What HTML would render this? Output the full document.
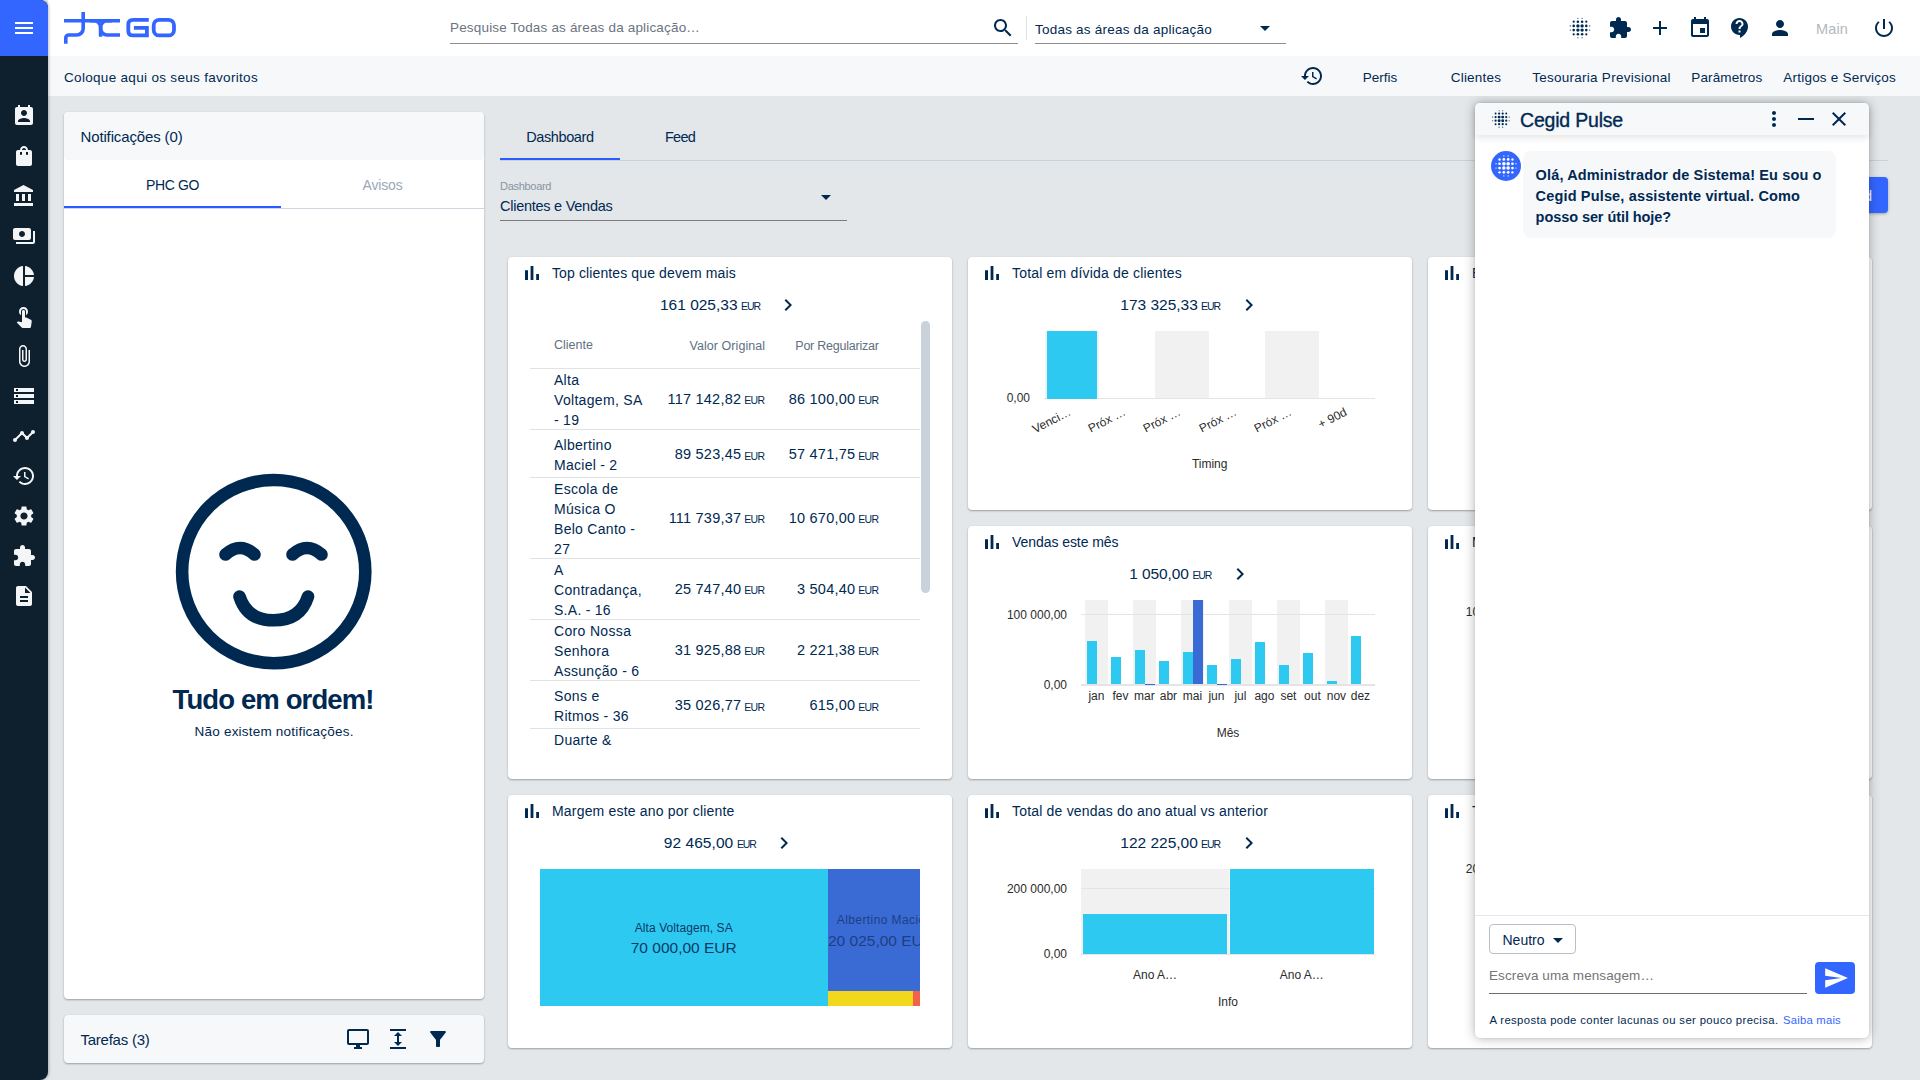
<!DOCTYPE html>
<html lang="pt">
<head>
<meta charset="utf-8">
<title>PHC GO</title>
<style>
*{box-sizing:border-box;margin:0;padding:0}
html,body{width:1920px;height:1080px;overflow:hidden}
body{position:relative;background:#e3e7e9;font-family:"Liberation Sans",sans-serif;color:#002952;font-size:15px}
.abs{position:absolute}
.t{position:absolute;white-space:nowrap;line-height:1.15}
svg{display:block}
.ic{position:absolute;fill:#002952}
.card{position:absolute;background:#fff;border-radius:4px;box-shadow:0 1px 2px rgba(0,0,0,.30),0 0 1px rgba(0,0,0,.10)}
</style>
</head>
<body>
<!-- top bar -->
<div class="abs" style="left:48px;top:0px;width:1872px;height:56px;background:#fff;"></div>
<div class="abs" style="left:48px;top:56px;width:1872px;height:40px;background:#f7f8fa;"></div>
<svg class="abs" style="left:56px;top:4px;width:130px;height:48px" viewBox="56 4 130 48" fill="none" stroke="#3366ff" stroke-width="3.6">
<path d="M64 20.76H120"/>
<path d="M83.2 12.1V28.54A6.5 6.5 0 0 1 76.7 35.04H68.6A2.8 2.8 0 0 0 65.8 37.84V43.8"/>
<path d="M90 20.76H94.1A6.500 6.500 0 0 1 100.6 27.26V36.84"/>
<path d="M112 20.76H107.1A6.500 6.500 0 0 0 100.6 27.26V28.54A6.500 6.500 0 0 0 107.1 35.04H120"/>
<path stroke-width="3.8" d="M148.8 19.8H133Q128.3 19.8 128.300 24.5V30.7Q128.3 35.4 133 35.400H146.9V27.87H133.9"/>
<rect stroke-width="3.8" x="153.7" y="19.8" width="20.3" height="15.6" rx="5.5"/>
</svg>
<span class="t" style="left:450.00px;top:19.94px;font-size:13.5px;letter-spacing:0.171px;color:#6b7480;">Pesquise Todas as áreas da aplicação…</span>
<div class="abs" style="left:450px;top:43px;width:568px;height:1px;background:#8e8e8e;"></div>
<svg class="ic" style="left:991.00px;top:16.00px;width:24px;height:24px;" viewBox="0 0 24 24"><path d="M15.5 14h-.79l-.28-.27C15.41 12.59 16 11.11 16 9.5 16 5.91 13.09 3 9.5 3S3 5.91 3 9.5 5.91 16 9.5 16c1.61 0 3.09-.59 4.23-1.57l.27.28v.79l5 4.99L20.490 19l-4.990-5zm-6 0C7.010 14 5 11.990 5 9.500S7.010 5 9.500 5 14 7.010 14 9.500 11.990 14 9.500 14z"/></svg>
<div class="abs" style="left:1026px;top:16px;width:1px;height:24px;background:#dfe3e8;"></div>
<span class="t" style="left:1035.00px;top:21.94px;font-size:13.5px;letter-spacing:0.218px;">Todas as áreas da aplicação</span>
<svg class="ic" style="left:1253.00px;top:16.00px;width:24px;height:24px;" viewBox="0 0 24 24"><path d="M7 10l5 5 5-5z"/></svg>
<div class="abs" style="left:1035px;top:43px;width:251px;height:1px;background:#8e8e8e;"></div>
<svg class="ic" style="left:1608.00px;top:16.00px;width:24px;height:24px;" viewBox="0 0 24 24"><path d="M20.5 11H19V7c0-1.1-.9-2-2-2h-4V3.5C13 2.12 11.88 1 10.5 1S8 2.12 8 3.5V5H4c-1.1 0-1.99.9-1.99 2v3.8H3.500c1.49 0 2.7 1.21 2.7 2.7s-1.21 2.7-2.7 2.7H2V20c0 1.1.9 2 2 2h3.800v-1.500c0-1.49 1.21-2.7 2.7-2.7 1.49 0 2.7 1.21 2.7 2.7V22H17c1.1 0 2-.9 2-2v-4h1.500c1.38 0 2.5-1.12 2.5-2.5S21.880 11 20.500 11z"/></svg>
<svg class="ic" style="left:1648.00px;top:16.00px;width:24px;height:24px;" viewBox="0 0 24 24"><path d="M19 13h-6v6h-2v-6H5v-2h6V5h2v6h6v2z"/></svg>
<svg class="ic" style="left:1688.00px;top:16.00px;width:24px;height:24px;" viewBox="0 0 24 24"><path d="M17 12h-5v5h5v-5zM16 1v2H8V1H6v2H5c-1.11 0-1.99.9-1.99 2L3 19c0 1.1.89 2 2 2h14c1.1 0 2-.9 2-2V5c0-1.1-.9-2-2-2h-1V1h-2zm3 18H5V8h14v11z"/></svg>
<svg class="ic" style="left:1728.00px;top:16.00px;width:24px;height:24px;" viewBox="0 0 24 24"><path d="M11.5 2C6.81 2 3 5.81 3 10.5S6.81 19 11.5 19h.5v3c4.86-2.34 8-7 8-11.5C20 5.81 16.19 2 11.5 2zm1 14.5h-2v-2h2v2zm0-3.500h-2c0-3.250 3-3 3-5 0-1.100-.9-2-2-2s-2 .9-2 2h-2c0-2.210 1.790-4 4-4s4 1.790 4 4c0 2.500-3 2.750-3 5z"/></svg>
<svg class="ic" style="left:1768.00px;top:16.00px;width:24px;height:24px;" viewBox="0 0 24 24"><path d="M12 12c2.21 0 4-1.79 4-4s-1.79-4-4-4-4 1.79-4 4 1.79 4 4 4zm0 2c-2.67 0-8 1.34-8 4v2h16v-2c0-2.66-5.33-4-8-4z"/></svg>
<svg class="ic" style="left:1872.00px;top:16.00px;width:24px;height:24px;" viewBox="0 0 24 24"><path d="M13 3h-2v10h2V3zm4.83 2.17l-1.42 1.42C17.99 7.86 19 9.81 19 12c0 3.87-3.13 7-7 7s-7-3.13-7-7c0-2.19 1.01-4.14 2.58-5.420L6.170 5.170C4.230 6.820 3 9.260 3 12c0 4.970 4.030 9 9 9s9-4.030 9-9c0-2.740-1.230-5.180-3.170-6.830z"/></svg>
<span class="t" style="left:1816.00px;top:20.66px;font-size:14.5px;letter-spacing:0.143px;color:#b4b7be;">Main</span>
<span class="t" style="left:64.00px;top:70.04px;font-size:13.5px;letter-spacing:0.313px;">Coloque aqui os seus favoritos</span>
<svg class="ic" style="left:1300.00px;top:64.00px;width:24px;height:24px;" viewBox="0 0 24 24"><path d="M13 3c-4.97 0-9 4.03-9 9H1l3.89 3.89.07.14L9 12H6c0-3.87 3.13-7 7-7s7 3.13 7 7-3.13 7-7 7c-1.93 0-3.68-.79-4.94-2.06l-1.42 1.42C8.27 19.99 10.51 21 13 21c4.97 0 9-4.03 9-9s-4.030-9-9-9zm-1 5v5l4.28 2.54.72-1.21-3.5-2.08V8H12z"/></svg>
<span class="t" style="left:1362.70px;top:70.04px;font-size:13.5px;letter-spacing:0.015px;">Perfis</span>
<span class="t" style="left:1450.70px;top:70.04px;font-size:13.5px;letter-spacing:0.228px;">Clientes</span>
<span class="t" style="left:1532.30px;top:70.04px;font-size:13.5px;letter-spacing:0.254px;">Tesouraria Previsional</span>
<span class="t" style="left:1691.30px;top:70.04px;font-size:13.5px;letter-spacing:0.122px;">Parâmetros</span>
<span class="t" style="left:1783.30px;top:70.04px;font-size:13.5px;letter-spacing:0.217px;">Artigos e Serviços</span>
<!-- sidebar -->
<div class="abs" style="left:0;top:0;width:48px;height:1080px;background:#0e202e;border-radius:0 8px 8px 0;box-shadow:1px 0 3px rgba(0,0,0,.24)"></div>
<div class="abs" style="left:0;top:0;width:48px;height:56px;background:#3366ff;border-radius:0 8px 0 0"></div>
<svg class="ic" style="left:12.00px;top:16.00px;width:24px;height:24px;fill:#fff;" viewBox="0 0 24 24"><path d="M3 18h18v-2H3v2zm0-5h18v-2H3v2zm0-7v2h18V6H3z"/></svg>
<svg class="ic" style="left:12.00px;top:104.00px;width:24px;height:24px;fill:#f4f5f7;" viewBox="0 0 24 24"><path d="M19 3h-1V1h-2v2H8V1H6v2H5c-1.11 0-2 .9-2 2v14c0 1.1.89 2 2 2h14c1.1 0 2-.9 2-2V5c0-1.1-.9-2-2-2zm-7 3c1.66 0 3 1.34 3 3s-1.34 3-3 3-3-1.34-3-3 1.34-3 3-3zm6 12H6v-1c0-2 4-3.1 6-3.1s6 1.1 6 3.1v1z"/></svg>
<svg class="ic" style="left:12.00px;top:144.00px;width:24px;height:24px;fill:#f4f5f7;" viewBox="0 0 24 24"><path d="M18 6h-2c0-2.21-1.79-4-4-4S8 3.79 8 6H6c-1.1 0-2 .9-2 2v12c0 1.1.9 2 2 2h12c1.1 0 2-.9 2-2V8c0-1.1-.9-2-2-2zm-8 4c0 .55-.45 1-1 1s-1-.45-1-1V8h2v2zm2-6c1.1 0 2 .9 2 2h-4c0-1.1.9-2 2-2zm4 6c0 .55-.45 1-1 1s-1-.45-1-1V8h2v2z"/></svg>
<svg class="ic" style="left:12.00px;top:184.00px;width:24px;height:24px;fill:#f4f5f7;" viewBox="0 0 24 24"><path d="M4 10v7h3v-7H4zm6 0v7h3v-7h-3zM2 22h19v-3H2v3zm14-12v7h3v-7h-3zm-4.5-9L2 6v2h19V6l-9.5-5z"/></svg>
<svg class="ic" style="left:12.00px;top:224.00px;width:24px;height:24px;fill:#f4f5f7;" viewBox="0 0 24 24"><path d="M19 14V6c0-1.1-.9-2-2-2H3c-1.1 0-2 .9-2 2v8c0 1.1.9 2 2 2h14c1.1 0 2-.9 2-2zm-9-1c-1.66 0-3-1.34-3-3s1.34-3 3-3 3 1.34 3 3-1.34 3-3 3zm13-6v11c0 1.1-.9 2-2 2H4v-2h17V7h2z"/></svg>
<svg class="ic" style="left:12.00px;top:264.00px;width:24px;height:24px;fill:#f4f5f7;" viewBox="0 0 24 24"><path d="M11 2v20c-5.07-.5-9-4.79-9-10s3.93-9.5 9-10zm2.03 0v8.99H22c-.47-4.74-4.24-8.52-8.97-8.99zm0 11.01V22c4.74-.47 8.5-4.25 8.97-8.99h-8.97z"/></svg>
<svg class="ic" style="left:12.00px;top:304.00px;width:24px;height:24px;fill:#f4f5f7;" viewBox="0 0 24 24"><path d="M9 11.24V7.5C9 6.12 10.12 5 11.5 5S14 6.12 14 7.5v3.74c1.21-.81 2-2.18 2-3.74C16 5.01 13.99 3 11.5 3S7 5.01 7 7.5c0 1.56.79 2.93 2 3.74zm9.84 4.63l-4.54-2.26c-.17-.07-.35-.11-.54-.11H13v-6c0-.83-.67-1.5-1.5-1.5S10 6.67 10 7.5v10.74l-3.43-.72c-.08-.01-.15-.03-.24-.03-.31 0-.59.13-.79.33l-.79.8 4.94 4.94c.27.27.65.44 1.06.44h6.79c.75 0 1.33-.55 1.44-1.28l.75-5.27c.01-.07.02-.14.02-.2 0-.62-.38-1.16-.91-1.38z"/></svg>
<svg class="ic" style="left:12.00px;top:344.00px;width:24px;height:24px;fill:#f4f5f7;" viewBox="0 0 24 24"><path d="M16.5 6v11.5c0 2.21-1.79 4-4 4s-4-1.79-4-4V5c0-1.38 1.12-2.5 2.5-2.5s2.5 1.12 2.5 2.5v10.5c0 .55-.45 1-1 1s-1-.45-1-1V6H10v9.5c0 1.38 1.12 2.5 2.5 2.5s2.5-1.12 2.5-2.5V5c0-2.21-1.79-4-4-4S7 2.79 7 5v12.5c0 3.04 2.46 5.5 5.5 5.5s5.500-2.46 5.5-5.5V6h-1.5z"/></svg>
<svg class="ic" style="left:12.00px;top:384.00px;width:24px;height:24px;fill:#f4f5f7;" viewBox="0 0 24 24"><path d="M2 20h20v-4H2v4zm2-3h2v2H4v-2zM2 4v4h20V4H2zm4 3H4V5h2v2zm-4 7h20v-4H2v4zm2-3h2v2H4v-2z"/></svg>
<svg class="ic" style="left:12.00px;top:424.00px;width:24px;height:24px;fill:#f4f5f7;" viewBox="0 0 24 24"><path d="M23 8c0 1.1-.9 2-2 2-.18 0-.35-.02-.51-.07l-3.56 3.55c.05.16.07.34.07.52 0 1.1-.9 2-2 2s-2-.9-2-2c0-.18.02-.36.07-.52l-2.55-2.55c-.16.05-.34.07-.52.07s-.36-.02-.52-.07l-4.55 4.56c.05.16.07.33.07.51 0 1.1-.9 2-2 2s-2-.9-2-2 .9-2 2-2c.18 0 .35.02.51.07l4.56-4.55C8.02 9.36 8 9.18 8 9c0-1.1.9-2 2-2s2 .9 2 2c0 .18-.02.36-.07.52l2.55 2.55c.16-.05.34-.07.52-.07s.36.02.52.07l3.55-3.56C19.02 8.35 19 8.18 19 8c0-1.1.9-2 2-2s2 .9 2 2z"/></svg>
<svg class="ic" style="left:12.00px;top:464.00px;width:24px;height:24px;fill:#f4f5f7;" viewBox="0 0 24 24"><path d="M13 3c-4.97 0-9 4.03-9 9H1l3.89 3.89.07.14L9 12H6c0-3.87 3.13-7 7-7s7 3.13 7 7-3.13 7-7 7c-1.93 0-3.68-.79-4.94-2.06l-1.42 1.42C8.27 19.99 10.51 21 13 21c4.97 0 9-4.03 9-9s-4.030-9-9-9zm-1 5v5l4.28 2.54.72-1.21-3.5-2.08V8H12z"/></svg>
<svg class="ic" style="left:12.00px;top:504.00px;width:24px;height:24px;fill:#f4f5f7;" viewBox="0 0 24 24"><path d="M19.14 12.94c.04-.3.06-.61.06-.94 0-.32-.02-.64-.07-.94l2.03-1.58c.18-.14.23-.41.12-.61l-1.92-3.32c-.12-.22-.37-.29-.59-.22l-2.39.96c-.5-.38-1.03-.7-1.62-.94l-.36-2.54c-.04-.24-.24-.41-.48-.41h-3.84c-.24 0-.43.17-.47.41l-.36 2.54c-.59.24-1.13.57-1.62.94l-2.39-.96c-.22-.08-.47 0-.59.22L2.74 8.87c-.12.21-.08.47.12.61l2.030 1.58c-.05.3-.09.63-.09.94s.02.64.07.94l-2.030 1.58c-.18.14-.23.41-.12.61l1.920 3.32c.12.22.37.29.59.22l2.39-.96c.5.38 1.030.7 1.620.94l.36 2.54c.05.24.24.41.48.41h3.840c.24 0 .44-.17.47-.41l.36-2.54c.59-.24 1.130-.56 1.620-.94l2.390.96c.22.08.47 0 .59-.22l1.920-3.32c.12-.22.07-.47-.12-.61l-2.010-1.580zM12 15.6c-1.980 0-3.600-1.620-3.600-3.600s1.620-3.600 3.600-3.600 3.600 1.620 3.600 3.600-1.620 3.600-3.600 3.600z"/></svg>
<svg class="ic" style="left:12.00px;top:544.00px;width:24px;height:24px;fill:#f4f5f7;" viewBox="0 0 24 24"><path d="M20.5 11H19V7c0-1.1-.9-2-2-2h-4V3.5C13 2.12 11.88 1 10.5 1S8 2.12 8 3.5V5H4c-1.1 0-1.99.9-1.99 2v3.8H3.500c1.49 0 2.7 1.21 2.7 2.7s-1.21 2.7-2.7 2.7H2V20c0 1.1.9 2 2 2h3.800v-1.500c0-1.49 1.21-2.7 2.7-2.7 1.49 0 2.7 1.21 2.7 2.7V22H17c1.1 0 2-.9 2-2v-4h1.500c1.38 0 2.5-1.12 2.5-2.5S21.880 11 20.500 11z"/></svg>
<svg class="ic" style="left:12.00px;top:584.00px;width:24px;height:24px;fill:#f4f5f7;" viewBox="0 0 24 24"><path d="M14 2H6c-1.1 0-1.99.9-1.99 2L4 20c0 1.1.89 2 1.99 2H18c1.1 0 2-.9 2-2V8l-6-6zm2 16H8v-2h8v2zm0-4H8v-2h8v2zm-3-5V3.500L18.500 9H13z"/></svg>
<!-- notifications -->
<div class="card" style="left:64px;top:112px;width:420px;height:887px"></div>
<div class="abs" style="left:64px;top:112px;width:420px;height:48px;background:#f7f8fa;border-radius:4px"></div>
<span class="t" style="left:80.50px;top:127.88px;font-size:15px;letter-spacing:-0.138px;">Notificações (0)</span>
<span class="t" style="left:146.00px;top:176.95px;font-size:14px;letter-spacing:-0.371px;">PHC GO</span>
<span class="t" style="left:362.50px;top:176.95px;font-size:14px;letter-spacing:-0.164px;color:#9aa8b8;">Avisos</span>
<div class="abs" style="left:64px;top:208px;width:420px;height:1px;background:#cfd6df;"></div>
<div class="abs" style="left:64px;top:206px;width:217px;height:2px;background:#2a5cff;"></div>
<svg class="abs" style="left:170px;top:468px;width:208px;height:208px" viewBox="170 468 208 208" fill="none" stroke="#002952" stroke-width="12.6" stroke-linecap="round">
<circle cx="273.7" cy="571.6" r="91.6"/>
<path d="M225.500 554.500Q240 541.500 254.500 554.500"/>
<path d="M292.500 554.500Q307 541.500 321.500 554.500"/>
<path d="M239.500 596.500Q247 620.300 273.700 620.300Q300.400 620.300 308 596.500"/>
</svg>
<span class="t" style="left:172.56px;top:684.19px;font-size:27.5px;letter-spacing:-0.884px;font-weight:700;">Tudo em ordem!</span>
<span class="t" style="left:194.60px;top:723.74px;font-size:13.5px;letter-spacing:0.207px;">Não existem notificações.</span>
<div class="card" style="left:64px;top:1015px;width:420px;height:48px;background:#f7f8fa"></div>
<span class="t" style="left:80.50px;top:1031.38px;font-size:15px;letter-spacing:-0.245px;">Tarefas (3)</span>
<svg class="ic" style="left:346.00px;top:1027.00px;width:24px;height:24px;" viewBox="0 0 24 24"><path d="M21 2H3c-1.1 0-2 .9-2 2v12c0 1.1.9 2 2 2h7v2H8v2h8v-2h-2v-2h7c1.1 0 2-.9 2-2V4c0-1.1-.9-2-2-2zm0 14H3V4h18v12z"/></svg>
<svg class="ic" style="left:386.00px;top:1027.00px;width:24px;height:24px;" viewBox="0 0 24 24"><path d="M4 20h16v2H4zM4 2h16v2H4zm9 7h3l-4-4-4 4h3v6H8l4 4 4-4h-3z"/></svg>
<svg class="ic" style="left:426.00px;top:1027.00px;width:24px;height:24px;" viewBox="0 0 24 24"><path d="M4.25 5.61C6.27 8.2 10 13 10 13v6c0 .55.45 1 1 1h2c.55 0 1-.45 1-1v-6s3.72-4.8 5.74-7.39c.51-.66.04-1.61-.79-1.61H5.04c-.83 0-1.3.95-.79 1.610z"/></svg>
<!-- dashboard -->
<span class="t" style="left:526.25px;top:129.16px;font-size:14.5px;letter-spacing:-0.404px;">Dashboard</span>
<span class="t" style="left:665.00px;top:129.16px;font-size:14.5px;letter-spacing:-0.763px;">Feed</span>
<div class="abs" style="left:500px;top:160px;width:1388px;height:1px;background:#c9d2dc;"></div>
<div class="abs" style="left:500px;top:158px;width:120px;height:2px;background:#2a5cff;"></div>
<span class="t" style="left:500.00px;top:179.88px;font-size:11px;letter-spacing:-0.291px;color:#8794a5;">Dashboard</span>
<span class="t" style="left:500.00px;top:197.96px;font-size:14.5px;letter-spacing:-0.258px;">Clientes e Vendas</span>
<svg class="ic" style="left:814.25px;top:185.00px;width:24px;height:24px;" viewBox="0 0 24 24"><path d="M7 10l5 5 5-5z"/></svg>
<div class="abs" style="left:500px;top:220px;width:347px;height:1px;background:#7b7b7b;"></div>
<div class="abs" style="left:1716px;top:177px;width:172px;height:36px;background:#3366ff;border-radius:4px;box-shadow:0 1px 3px rgba(0,0,0,.3)"></div>
<span class="t" style="left:1734.25px;top:187.65px;font-size:14px;color:#fff;">Configurar Dashboard</span>
<div class="card" style="left:508px;top:257px;width:444px;height:522px"></div>
<svg class="ic" style="left:519.50px;top:261.00px;width:24px;height:24px;" viewBox="0 0 24 24"><path d="M5 9.2h3V19H5zM10.6 5h2.8v14h-2.8zm5.6 8H19v6h-2.8z"/></svg>
<span class="t" style="left:552.00px;top:264.95px;font-size:14px;letter-spacing:0.119px;">Top clientes que devem mais</span>
<span class="t" style="left:660.00px;top:296.09px;font-size:15.5px;letter-spacing:-0.008px;">161 025,33</span>
<span class="t" style="left:741.00px;top:300.46px;font-size:10.5px;letter-spacing:-1.057px;">EUR</span>
<svg class="ic" style="left:776.00px;top:292.50px;width:24px;height:24px;" viewBox="0 0 24 24"><path d="M10 6L8.59 7.41 13.17 12l-4.58 4.59L10 18l6-6z"/></svg>
<div class="abs" style="left:508px;top:321px;width:444px;height:430px;overflow:hidden">
<span class="t" style="left:46.00px;top:16.81px;font-size:12.5px;letter-spacing:0.013px;color:#5f6f82;">Cliente</span>
<span class="t" style="left:181.55px;top:17.81px;font-size:12.5px;letter-spacing:0.050px;color:#5f6f82;">Valor Original</span>
<span class="t" style="left:287.28px;top:17.81px;font-size:12.5px;letter-spacing:-0.223px;color:#5f6f82;">Por Regularizar</span>
<div class="abs" style="left:22px;top:47px;width:390px;height:1px;background:#e1e2e4"></div>
<span class="t" style="left:46.00px;top:50.95px;font-size:14px;letter-spacing:0.271px;">Alta</span>
<span class="t" style="left:46.00px;top:70.95px;font-size:14px;letter-spacing:0.318px;">Voltagem, SA</span>
<span class="t" style="left:46.00px;top:90.95px;font-size:14px;letter-spacing:0.271px;">- 19</span>
<span class="t" style="left:159.57px;top:69.66px;font-size:14.5px;letter-spacing:0.214px;">117 142,82</span>
<span class="t" style="left:236.28px;top:73.46px;font-size:10.5px;letter-spacing:-0.723px;">EUR</span>
<span class="t" style="left:280.77px;top:69.66px;font-size:14.5px;letter-spacing:0.215px;">86 100,00</span>
<span class="t" style="left:350.28px;top:73.46px;font-size:10.5px;letter-spacing:-0.723px;">EUR</span>
<div class="abs" style="left:22px;top:108px;width:390px;height:1px;background:#e1e2e4"></div>
<span class="t" style="left:46.00px;top:116.45px;font-size:14px;letter-spacing:0.276px;">Albertino</span>
<span class="t" style="left:46.00px;top:136.45px;font-size:14px;letter-spacing:0.273px;">Maciel - 2</span>
<span class="t" style="left:166.77px;top:125.46px;font-size:14.5px;letter-spacing:0.215px;">89 523,45</span>
<span class="t" style="left:236.28px;top:129.26px;font-size:10.5px;letter-spacing:-0.723px;">EUR</span>
<span class="t" style="left:280.77px;top:125.46px;font-size:14.5px;letter-spacing:0.215px;">57 471,75</span>
<span class="t" style="left:350.28px;top:129.26px;font-size:10.5px;letter-spacing:-0.723px;">EUR</span>
<div class="abs" style="left:22px;top:156px;width:390px;height:1px;background:#e1e2e4"></div>
<span class="t" style="left:46.00px;top:159.95px;font-size:14px;letter-spacing:0.307px;">Escola de</span>
<span class="t" style="left:46.00px;top:179.95px;font-size:14px;letter-spacing:0.333px;">Música O</span>
<span class="t" style="left:46.00px;top:199.95px;font-size:14px;letter-spacing:0.292px;">Belo Canto -</span>
<span class="t" style="left:46.00px;top:219.95px;font-size:14px;letter-spacing:0.350px;">27</span>
<span class="t" style="left:160.68px;top:188.66px;font-size:14.5px;letter-spacing:0.211px;">111 739,37</span>
<span class="t" style="left:236.28px;top:192.46px;font-size:10.5px;letter-spacing:-0.723px;">EUR</span>
<span class="t" style="left:280.77px;top:188.66px;font-size:14.5px;letter-spacing:0.215px;">10 670,00</span>
<span class="t" style="left:350.28px;top:192.46px;font-size:10.5px;letter-spacing:-0.723px;">EUR</span>
<div class="abs" style="left:22px;top:237px;width:390px;height:1px;background:#e1e2e4"></div>
<span class="t" style="left:46.00px;top:240.95px;font-size:14px;">A</span>
<span class="t" style="left:46.00px;top:260.95px;font-size:14px;letter-spacing:0.315px;">Contradança,</span>
<span class="t" style="left:46.00px;top:280.95px;font-size:14px;letter-spacing:0.272px;">S.A. - 16</span>
<span class="t" style="left:166.77px;top:259.66px;font-size:14.5px;letter-spacing:0.215px;">25 747,40</span>
<span class="t" style="left:236.28px;top:263.46px;font-size:10.5px;letter-spacing:-0.723px;">EUR</span>
<span class="t" style="left:289.07px;top:259.66px;font-size:14.5px;letter-spacing:0.212px;">3 504,40</span>
<span class="t" style="left:350.28px;top:263.46px;font-size:10.5px;letter-spacing:-0.723px;">EUR</span>
<div class="abs" style="left:22px;top:298px;width:390px;height:1px;background:#e1e2e4"></div>
<span class="t" style="left:46.00px;top:301.95px;font-size:14px;letter-spacing:0.333px;">Coro Nossa</span>
<span class="t" style="left:46.00px;top:321.95px;font-size:14px;letter-spacing:0.340px;">Senhora</span>
<span class="t" style="left:46.00px;top:341.95px;font-size:14px;letter-spacing:0.306px;">Assunção - 6</span>
<span class="t" style="left:166.77px;top:320.66px;font-size:14.5px;letter-spacing:0.215px;">31 925,88</span>
<span class="t" style="left:236.28px;top:324.46px;font-size:10.5px;letter-spacing:-0.723px;">EUR</span>
<span class="t" style="left:289.07px;top:320.66px;font-size:14.5px;letter-spacing:0.212px;">2 221,38</span>
<span class="t" style="left:350.28px;top:324.46px;font-size:10.5px;letter-spacing:-0.723px;">EUR</span>
<div class="abs" style="left:22px;top:359px;width:390px;height:1px;background:#e1e2e4"></div>
<span class="t" style="left:46.00px;top:367.45px;font-size:14px;letter-spacing:0.327px;">Sons e</span>
<span class="t" style="left:46.00px;top:387.45px;font-size:14px;letter-spacing:0.293px;">Ritmos - 36</span>
<span class="t" style="left:166.77px;top:376.46px;font-size:14.5px;letter-spacing:0.215px;">35 026,77</span>
<span class="t" style="left:236.28px;top:380.26px;font-size:10.5px;letter-spacing:-0.723px;">EUR</span>
<span class="t" style="left:301.54px;top:376.46px;font-size:14.5px;letter-spacing:0.222px;">615,00</span>
<span class="t" style="left:350.28px;top:380.26px;font-size:10.5px;letter-spacing:-0.723px;">EUR</span>
<div class="abs" style="left:22px;top:407px;width:390px;height:1px;background:#e1e2e4"></div>
<span class="t" style="left:46.00px;top:410.95px;font-size:14px;letter-spacing:0.311px;">Duarte &amp;</span>
<span class="t" style="left:46.00px;top:430.95px;font-size:14px;letter-spacing:0.295px;">Duarte,</span>
<span class="t" style="left:46.00px;top:450.95px;font-size:14px;letter-spacing:0.289px;">Lda - 12</span>
</div>
<div class="abs" style="left:921px;top:321px;width:9px;height:272px;background:#c9d1db;border-radius:5px"></div>
<div class="card" style="left:968px;top:257px;width:444px;height:253px"></div>
<svg class="ic" style="left:979.50px;top:261.00px;width:24px;height:24px;" viewBox="0 0 24 24"><path d="M5 9.2h3V19H5zM10.6 5h2.8v14h-2.8zm5.6 8H19v6h-2.8z"/></svg>
<span class="t" style="left:1012.00px;top:264.95px;font-size:14px;letter-spacing:0.186px;">Total em dívida de clientes</span>
<span class="t" style="left:1120.30px;top:296.09px;font-size:15.5px;letter-spacing:-0.008px;">173 325,33</span>
<span class="t" style="left:1201.00px;top:300.46px;font-size:10.5px;letter-spacing:-1.057px;">EUR</span>
<svg class="ic" style="left:1236.50px;top:292.50px;width:24px;height:24px;" viewBox="0 0 24 24"><path d="M10 6L8.59 7.41 13.17 12l-4.58 4.59L10 18l6-6z"/></svg>
<div class="abs" style="left:1044.60px;top:331.00px;width:54.40px;height:67.00px;background:#f1f1f1"></div>
<div class="abs" style="left:1154.70px;top:331.00px;width:54.40px;height:67.00px;background:#f1f1f1"></div>
<div class="abs" style="left:1264.80px;top:331.00px;width:54.40px;height:67.00px;background:#f1f1f1"></div>
<div class="abs" style="left:1044.00px;top:397.50px;width:331.00px;height:1.50px;background:#e4e4e4"></div>
<div class="abs" style="left:1047.00px;top:331.00px;width:50.00px;height:67.50px;background:#2ec9f1"></div>
<span class="t" style="left:1006.64px;top:392.40px;font-size:12px;color:#2b2b2b;">0,00</span>
<span class="t" style="left:1028.74px;top:404.50px;font-size:12px;color:#2b2b2b;transform-origin:100% 50%;transform:rotate(-27deg)">Venci…</span>
<span class="t" style="left:1085.29px;top:404.50px;font-size:12px;color:#2b2b2b;transform-origin:100% 50%;transform:rotate(-27deg)">Próx …</span>
<span class="t" style="left:1140.49px;top:404.50px;font-size:12px;color:#2b2b2b;transform-origin:100% 50%;transform:rotate(-27deg)">Próx …</span>
<span class="t" style="left:1195.69px;top:404.50px;font-size:12px;color:#2b2b2b;transform-origin:100% 50%;transform:rotate(-27deg)">Próx …</span>
<span class="t" style="left:1250.89px;top:404.50px;font-size:12px;color:#2b2b2b;transform-origin:100% 50%;transform:rotate(-27deg)">Próx …</span>
<span class="t" style="left:1315.74px;top:404.50px;font-size:12px;color:#2b2b2b;transform-origin:100% 50%;transform:rotate(-27deg)">+ 90d</span>
<span class="t" style="left:1191.92px;top:458.40px;font-size:12px;color:#2b2b2b;">Timing</span>
<div class="card" style="left:968px;top:526px;width:444px;height:253px"></div>
<svg class="ic" style="left:979.50px;top:530.00px;width:24px;height:24px;" viewBox="0 0 24 24"><path d="M5 9.2h3V19H5zM10.6 5h2.8v14h-2.8zm5.6 8H19v6h-2.8z"/></svg>
<span class="t" style="left:1012.00px;top:533.95px;font-size:14px;letter-spacing:-0.060px;">Vendas este mês</span>
<span class="t" style="left:1129.30px;top:565.09px;font-size:15.5px;letter-spacing:-0.092px;">1 050,00</span>
<span class="t" style="left:1192.40px;top:569.46px;font-size:10.5px;letter-spacing:-1.057px;">EUR</span>
<svg class="ic" style="left:1227.80px;top:561.50px;width:24px;height:24px;" viewBox="0 0 24 24"><path d="M10 6L8.59 7.41 13.17 12l-4.58 4.59L10 18l6-6z"/></svg>
<div class="abs" style="left:1084.60px;top:600.00px;width:23.60px;height:84.50px;background:#f1f1f1"></div>
<div class="abs" style="left:1132.60px;top:600.00px;width:23.60px;height:84.50px;background:#f1f1f1"></div>
<div class="abs" style="left:1180.60px;top:600.00px;width:23.60px;height:84.50px;background:#f1f1f1"></div>
<div class="abs" style="left:1228.60px;top:600.00px;width:23.60px;height:84.50px;background:#f1f1f1"></div>
<div class="abs" style="left:1276.60px;top:600.00px;width:23.60px;height:84.50px;background:#f1f1f1"></div>
<div class="abs" style="left:1324.60px;top:600.00px;width:23.60px;height:84.50px;background:#f1f1f1"></div>
<div class="abs" style="left:1081.00px;top:614.00px;width:294.00px;height:1.00px;background:#e4e4e4"></div>
<div class="abs" style="left:1087.10px;top:641.00px;width:10.00px;height:43.50px;background:#2ec9f1"></div>
<div class="abs" style="left:1111.10px;top:657.30px;width:10.00px;height:27.20px;background:#2ec9f1"></div>
<div class="abs" style="left:1135.10px;top:649.70px;width:10.00px;height:34.80px;background:#2ec9f1"></div>
<div class="abs" style="left:1159.10px;top:660.60px;width:10.00px;height:23.90px;background:#2ec9f1"></div>
<div class="abs" style="left:1183.10px;top:651.60px;width:10.00px;height:32.90px;background:#2ec9f1"></div>
<div class="abs" style="left:1207.10px;top:664.90px;width:10.00px;height:19.60px;background:#2ec9f1"></div>
<div class="abs" style="left:1231.10px;top:659.00px;width:10.00px;height:25.50px;background:#2ec9f1"></div>
<div class="abs" style="left:1255.10px;top:642.00px;width:10.00px;height:42.50px;background:#2ec9f1"></div>
<div class="abs" style="left:1279.10px;top:665.00px;width:10.00px;height:19.50px;background:#2ec9f1"></div>
<div class="abs" style="left:1303.10px;top:653.00px;width:10.00px;height:31.50px;background:#2ec9f1"></div>
<div class="abs" style="left:1327.10px;top:681.00px;width:10.00px;height:3.50px;background:#2ec9f1"></div>
<div class="abs" style="left:1351.10px;top:636.00px;width:10.00px;height:48.50px;background:#2ec9f1"></div>
<div class="abs" style="left:1193.00px;top:600.00px;width:10.00px;height:84.50px;background:#3a6bd4"></div>
<div class="abs" style="left:1081.00px;top:684.00px;width:294.00px;height:1.50px;background:#e4e4e4"></div>
<div class="abs" style="left:1145.00px;top:684.00px;width:10.00px;height:1.00px;background:#3a6bd4"></div>
<div class="abs" style="left:1217.00px;top:684.00px;width:10.00px;height:1.00px;background:#3a6bd4"></div>
<span class="t" style="left:1006.94px;top:608.90px;font-size:12px;color:#2b2b2b;">100 000,00</span>
<span class="t" style="left:1043.64px;top:678.90px;font-size:12px;color:#2b2b2b;">0,00</span>
<span class="t" style="left:1088.39px;top:690.40px;font-size:12px;color:#2b2b2b;">jan</span>
<span class="t" style="left:1112.40px;top:690.40px;font-size:12px;color:#2b2b2b;">fev</span>
<span class="t" style="left:1134.07px;top:690.40px;font-size:12px;color:#2b2b2b;">mar</span>
<span class="t" style="left:1159.73px;top:690.40px;font-size:12px;color:#2b2b2b;">abr</span>
<span class="t" style="left:1182.73px;top:690.40px;font-size:12px;color:#2b2b2b;">mai</span>
<span class="t" style="left:1208.39px;top:690.40px;font-size:12px;color:#2b2b2b;">jun</span>
<span class="t" style="left:1234.40px;top:690.40px;font-size:12px;color:#2b2b2b;">jul</span>
<span class="t" style="left:1254.39px;top:690.40px;font-size:12px;color:#2b2b2b;">ago</span>
<span class="t" style="left:1280.40px;top:690.40px;font-size:12px;color:#2b2b2b;">set</span>
<span class="t" style="left:1304.06px;top:690.40px;font-size:12px;color:#2b2b2b;">out</span>
<span class="t" style="left:1326.73px;top:690.40px;font-size:12px;color:#2b2b2b;">nov</span>
<span class="t" style="left:1350.73px;top:690.40px;font-size:12px;color:#2b2b2b;">dez</span>
<span class="t" style="left:1216.66px;top:727.40px;font-size:12px;color:#2b2b2b;">Mês</span>
<div class="card" style="left:968px;top:795px;width:444px;height:253px"></div>
<svg class="ic" style="left:979.50px;top:799.00px;width:24px;height:24px;" viewBox="0 0 24 24"><path d="M5 9.2h3V19H5zM10.6 5h2.8v14h-2.8zm5.6 8H19v6h-2.8z"/></svg>
<span class="t" style="left:1012.00px;top:802.95px;font-size:14px;letter-spacing:0.193px;">Total de vendas do ano atual vs anterior</span>
<span class="t" style="left:1120.30px;top:834.09px;font-size:15.5px;letter-spacing:-0.008px;">122 225,00</span>
<span class="t" style="left:1201.00px;top:838.46px;font-size:10.5px;letter-spacing:-1.057px;">EUR</span>
<svg class="ic" style="left:1236.50px;top:830.50px;width:24px;height:24px;" viewBox="0 0 24 24"><path d="M10 6L8.59 7.41 13.17 12l-4.58 4.59L10 18l6-6z"/></svg>
<div class="abs" style="left:1081.00px;top:869.00px;width:147.60px;height:85.00px;background:#f1f1f1"></div>
<div class="abs" style="left:1081.00px;top:888.00px;width:294.00px;height:1.00px;background:#e4e4e4"></div>
<div class="abs" style="left:1083.20px;top:914.00px;width:143.80px;height:40.00px;background:#2ec9f1"></div>
<div class="abs" style="left:1230.00px;top:869.00px;width:143.90px;height:85.00px;background:#2ec9f1"></div>
<div class="abs" style="left:1081.00px;top:953.50px;width:294.00px;height:1.50px;background:#e4e4e4"></div>
<span class="t" style="left:1006.94px;top:882.90px;font-size:12px;color:#2b2b2b;">200 000,00</span>
<span class="t" style="left:1043.64px;top:948.40px;font-size:12px;color:#2b2b2b;">0,00</span>
<span class="t" style="left:1132.99px;top:969.40px;font-size:12px;color:#2b2b2b;">Ano A…</span>
<span class="t" style="left:1279.79px;top:969.40px;font-size:12px;color:#2b2b2b;">Ano A…</span>
<span class="t" style="left:1217.99px;top:995.90px;font-size:12px;color:#2b2b2b;">Info</span>
<div class="card" style="left:508px;top:795px;width:444px;height:253px"></div>
<svg class="ic" style="left:519.50px;top:799.00px;width:24px;height:24px;" viewBox="0 0 24 24"><path d="M5 9.2h3V19H5zM10.6 5h2.8v14h-2.8zm5.6 8H19v6h-2.8z"/></svg>
<span class="t" style="left:552.00px;top:802.95px;font-size:14px;letter-spacing:0.188px;">Margem este ano por cliente</span>
<span class="t" style="left:663.75px;top:834.09px;font-size:15.5px;letter-spacing:0.060px;">92 465,00</span>
<span class="t" style="left:737.00px;top:838.46px;font-size:10.5px;letter-spacing:-1.140px;">EUR</span>
<svg class="ic" style="left:771.75px;top:830.50px;width:24px;height:24px;" viewBox="0 0 24 24"><path d="M10 6L8.59 7.41 13.17 12l-4.58 4.59L10 18l6-6z"/></svg>
<div class="abs" style="left:540px;top:869px;width:380px;height:137px;overflow:hidden">
<div class="abs" style="left:0;top:0;width:287.600px;height:137px;background:#2ec9f1"></div>
<div class="abs" style="left:288px;top:0;width:92px;height:121.8px;background:#3a6bd4"></div>
<div class="abs" style="left:288px;top:122px;width:84.5px;height:15px;background:#f2d81c"></div>
<div class="abs" style="left:373px;top:122px;width:7px;height:15px;background:#f4614a"></div>
<span class="t" style="left:94.79px;top:53.10px;font-size:12px;letter-spacing:0.075px;color:#0b3a66;">Alta Voltagem, SA</span>
<span class="t" style="left:90.75px;top:70.09px;font-size:15.5px;letter-spacing:0.001px;color:#0b3a66;">70 000,00 EUR</span>
<span class="t" style="left:296.75px;top:45.10px;font-size:12px;letter-spacing:0.414px;color:#1c3f86;">Albertino Maciel</span>
<span class="t" style="left:288.00px;top:63.09px;font-size:15.5px;letter-spacing:0.001px;color:#1c3f86;">20 025,00 EUR</span>
</div>
<div class="card" style="left:1428px;top:257px;width:444px;height:253px"></div>
<svg class="ic" style="left:1439.50px;top:261.00px;width:24px;height:24px;" viewBox="0 0 24 24"><path d="M5 9.2h3V19H5zM10.6 5h2.8v14h-2.8zm5.6 8H19v6h-2.8z"/></svg>
<div class="abs" style="left:1472px;top:265px;width:3px;height:16px;overflow:hidden"><span class="t" style="left:0;top:0;font-size:14px">E</span></div>
<div class="card" style="left:1428px;top:526px;width:444px;height:253px"></div>
<svg class="ic" style="left:1439.50px;top:530.00px;width:24px;height:24px;" viewBox="0 0 24 24"><path d="M5 9.2h3V19H5zM10.6 5h2.8v14h-2.8zm5.6 8H19v6h-2.8z"/></svg>
<div class="abs" style="left:1472px;top:534px;width:3px;height:16px;overflow:hidden"><span class="t" style="left:0;top:0;font-size:14px">M</span></div>
<div class="card" style="left:1428px;top:795px;width:444px;height:253px"></div>
<svg class="ic" style="left:1439.50px;top:799.00px;width:24px;height:24px;" viewBox="0 0 24 24"><path d="M5 9.2h3V19H5zM10.6 5h2.8v14h-2.8zm5.6 8H19v6h-2.8z"/></svg>
<div class="abs" style="left:1472px;top:803px;width:3px;height:16px;overflow:hidden"><span class="t" style="left:0;top:0;font-size:14px">T</span></div>
<div class="abs" style="left:1440px;top:604px;width:35px;height:16px;overflow:hidden"><span class="t" style="left:25.8px;top:1.5px;font-size:12px;color:#2b2b2b">100 000,00</span></div>
<div class="abs" style="left:1440px;top:862px;width:35px;height:16px;overflow:hidden"><span class="t" style="left:25.8px;top:1.2px;font-size:12px;color:#2b2b2b">200 000,00</span></div>
<svg class="abs" style="left:1568px;top:16px;width:24px;height:24px" viewBox="1568 16 24 24"><g fill="#002952"><circle cx="1570.26" cy="25.90" r="0.60"/><circle cx="1570.26" cy="30.10" r="0.60"/><circle cx="1573.70" cy="21.70" r="1.12"/><circle cx="1573.70" cy="25.90" r="1.30"/><circle cx="1573.70" cy="30.10" r="1.30"/><circle cx="1573.70" cy="34.30" r="1.12"/><circle cx="1577.90" cy="18.26" r="0.60"/><circle cx="1577.90" cy="21.70" r="1.30"/><circle cx="1577.90" cy="25.90" r="1.70"/><circle cx="1577.90" cy="30.10" r="1.70"/><circle cx="1577.90" cy="34.30" r="1.30"/><circle cx="1577.90" cy="37.74" r="0.60"/><circle cx="1582.10" cy="18.26" r="0.60"/><circle cx="1582.10" cy="21.70" r="1.30"/><circle cx="1582.10" cy="25.90" r="1.70"/><circle cx="1582.10" cy="30.10" r="1.70"/><circle cx="1582.10" cy="34.30" r="1.30"/><circle cx="1582.10" cy="37.74" r="0.60"/><circle cx="1586.30" cy="21.70" r="1.12"/><circle cx="1586.30" cy="25.90" r="1.30"/><circle cx="1586.30" cy="30.10" r="1.30"/><circle cx="1586.30" cy="34.30" r="1.12"/><circle cx="1589.74" cy="25.90" r="0.60"/><circle cx="1589.74" cy="30.10" r="0.60"/></g></svg>
<!-- cegid pulse -->
<div class="abs" style="left:1475px;top:103px;width:394px;height:935px;background:#fff;border-radius:5px;box-shadow:0 0 12px rgba(0,0,0,.30),0 0 3px rgba(0,0,0,.08);clip-path:inset(-7px -24px -24px -24px)"></div>
<div class="abs" style="left:1475px;top:103px;width:394px;height:32px;background:#f7f8fa;border-radius:5px 5px 3px 3px;box-shadow:0 3px 7px rgba(0,0,0,.10)"></div>
<svg class="abs" style="left:1489px;top:107px;width:24px;height:24px" viewBox="1489 107 24 24"><g fill="#002952"><circle cx="1492.66" cy="117.12" r="0.52"/><circle cx="1492.66" cy="120.68" r="0.52"/><circle cx="1495.58" cy="113.58" r="0.97"/><circle cx="1495.58" cy="117.12" r="1.13"/><circle cx="1495.58" cy="120.68" r="1.13"/><circle cx="1495.58" cy="124.23" r="0.97"/><circle cx="1499.12" cy="110.66" r="0.52"/><circle cx="1499.12" cy="113.58" r="1.13"/><circle cx="1499.12" cy="117.12" r="1.48"/><circle cx="1499.12" cy="120.68" r="1.48"/><circle cx="1499.12" cy="124.23" r="1.13"/><circle cx="1499.12" cy="127.14" r="0.52"/><circle cx="1502.68" cy="110.66" r="0.52"/><circle cx="1502.68" cy="113.58" r="1.13"/><circle cx="1502.68" cy="117.12" r="1.48"/><circle cx="1502.68" cy="120.68" r="1.48"/><circle cx="1502.68" cy="124.23" r="1.13"/><circle cx="1502.68" cy="127.14" r="0.52"/><circle cx="1506.23" cy="113.58" r="0.97"/><circle cx="1506.23" cy="117.12" r="1.13"/><circle cx="1506.23" cy="120.68" r="1.13"/><circle cx="1506.23" cy="124.23" r="0.97"/><circle cx="1509.14" cy="117.12" r="0.52"/><circle cx="1509.14" cy="120.68" r="0.52"/></g></svg>
<span class="t" style="left:1520.00px;top:108.99px;font-size:19.5px;letter-spacing:-0.195px;-webkit-text-stroke:0.35px #002952;">Cegid Pulse</span>
<svg class="ic" style="left:1761.70px;top:107.00px;width:24px;height:24px;" viewBox="0 0 24 24"><path d="M12 8c1.1 0 2-.9 2-2s-.9-2-2-2-2 .9-2 2 .9 2 2 2zm0 2c-1.1 0-2 .9-2 2s.9 2 2 2 2-.9 2-2-.9-2-2-2zm0 6c-1.1 0-2 .9-2 2s.9 2 2 2 2-.9 2-2-.9-2-2-2z"/></svg>
<div class="abs" style="left:1798px;top:118px;width:16px;height:2px;background:#002952;"></div>
<svg class="ic" style="left:1827.00px;top:107.00px;width:24px;height:24px;" viewBox="0 0 24 24"><path d="M19 6.41L17.59 5 12 10.59 6.41 5 5 6.41 10.59 12 5 17.59 6.41 19 12 13.41 17.59 19 19 17.59 13.41 12z"/></svg>
<div class="abs" style="left:1491px;top:151px;width:30px;height:30px;border-radius:50%;background:#3366ff"></div>
<svg class="abs" style="left:1491px;top:151px;width:30px;height:30px" viewBox="1491 151 30 30"><g fill="#fff"><circle cx="1496.02" cy="163.75" r="0.63"/><circle cx="1496.02" cy="168.05" r="0.63"/><circle cx="1499.55" cy="159.45" r="1.18"/><circle cx="1499.55" cy="163.75" r="1.37"/><circle cx="1499.55" cy="168.05" r="1.37"/><circle cx="1499.55" cy="172.35" r="1.18"/><circle cx="1503.85" cy="155.92" r="0.63"/><circle cx="1503.85" cy="159.45" r="1.37"/><circle cx="1503.85" cy="163.75" r="1.79"/><circle cx="1503.85" cy="168.05" r="1.79"/><circle cx="1503.85" cy="172.35" r="1.37"/><circle cx="1503.85" cy="175.88" r="0.63"/><circle cx="1508.15" cy="155.92" r="0.63"/><circle cx="1508.15" cy="159.45" r="1.37"/><circle cx="1508.15" cy="163.75" r="1.79"/><circle cx="1508.15" cy="168.05" r="1.79"/><circle cx="1508.15" cy="172.35" r="1.37"/><circle cx="1508.15" cy="175.88" r="0.63"/><circle cx="1512.45" cy="159.45" r="1.18"/><circle cx="1512.45" cy="163.75" r="1.37"/><circle cx="1512.45" cy="168.05" r="1.37"/><circle cx="1512.45" cy="172.35" r="1.18"/><circle cx="1515.98" cy="163.75" r="0.63"/><circle cx="1515.98" cy="168.05" r="0.63"/></g></svg>
<div class="abs" style="left:1523px;top:151px;width:313px;height:87px;background:#f7f8fa;border-radius:8px"></div>
<span class="t" style="left:1535.60px;top:167.26px;font-size:14.5px;letter-spacing:0.137px;font-weight:700;">Olá, Administrador de Sistema! Eu sou o</span>
<span class="t" style="left:1535.60px;top:188.16px;font-size:14.5px;letter-spacing:0.158px;font-weight:700;">Cegid Pulse, assistente virtual. Como</span>
<span class="t" style="left:1535.60px;top:209.06px;font-size:14.5px;letter-spacing:-0.073px;font-weight:700;">posso ser útil hoje?</span>
<div class="abs" style="left:1475px;top:915px;width:394px;height:1px;background:#e3e6ea;"></div>
<div class="abs" style="left:1489px;top:924px;width:87px;height:30px;border:1px solid #b9bfc7;border-radius:4px;background:#fff"></div>
<span class="t" style="left:1502.50px;top:931.95px;font-size:14px;letter-spacing:-0.004px;">Neutro</span>
<svg class="ic" style="left:1546.00px;top:927.50px;width:24px;height:24px;" viewBox="0 0 24 24"><path d="M7 10l5 5 5-5z"/></svg>
<span class="t" style="left:1489.00px;top:967.74px;font-size:13.5px;letter-spacing:0.104px;color:#757575;">Escreva uma mensagem…</span>
<div class="abs" style="left:1489px;top:993px;width:318px;height:1px;background:#6e6e6e;"></div>
<div class="abs" style="left:1815px;top:962px;width:40px;height:32px;background:#3366ff;border-radius:4px"></div>
<svg class="ic" style="left:1822.50px;top:965.00px;width:26px;height:26px;fill:#fff;" viewBox="0 0 24 24"><path d="M2.01 21L23 12 2.01 3 2 10l15 2-15 2z"/></svg>
<span class="t" style="left:1489.50px;top:1014.30px;font-size:11.3px;letter-spacing:0.375px;">A resposta pode conter lacunas ou ser pouco precisa.</span>
<span class="t" style="left:1783.00px;top:1014.30px;font-size:11.3px;letter-spacing:0.210px;color:#3366ff;">Saiba mais</span>
</body>
</html>
